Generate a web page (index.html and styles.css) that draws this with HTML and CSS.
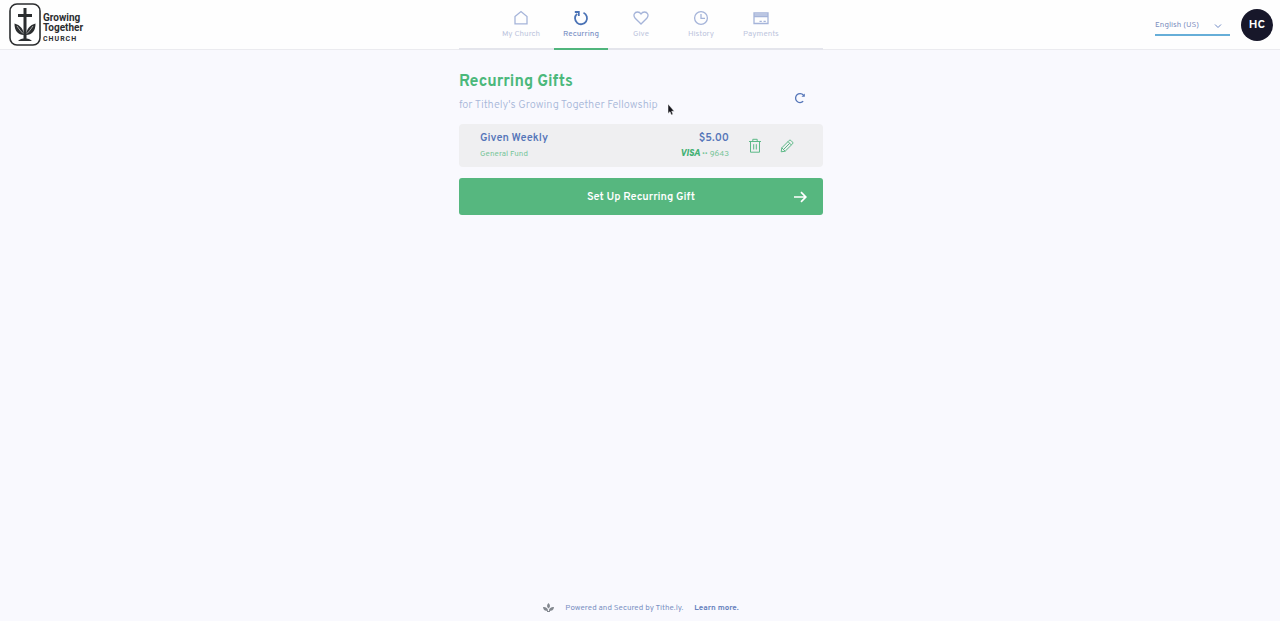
FILE: index.html
```html
<!DOCTYPE html>
<html lang="en">
<head>
    <meta charset="UTF-8">
    <meta name="viewport" content="width=device-width, initial-scale=1.0">
    <title>Recurring Gifts</title>
    <link rel="stylesheet" href="styles.css">
</head>
<body>
    <header class="header">
        <a href="#" class="logo">
            <svg width="32" height="43" viewBox="0 0 32 43">
                <rect x="1" y="1" width="30" height="41" rx="7" fill="#fff" stroke="#2b2d2f" stroke-width="1.6"/>
                <g fill="#2b2d2f">
                    <path d="M14.500 5h3v6h5.500v3h-5.500v21.500c2 .2 4 1 5.500 2.500H9c1.500-1.500 3.500-2.300 5.500-2.500V14H9v-3h5.500z"/>
                    <path d="M15 32c-6 0-9.500-4-9.500-11.500 5.500 1.500 9 5.500 9.500 11.500z"/>
                    <path d="M17 32c6 0 9.500-4 9.500-11.500-5.500 1.500-9 5.500-9.500 11.500z"/>
                </g>
                <path d="M8 23c2 3 4 5.500 6 7.500M24 23c-2 3-4 5.500-6 7.500" fill="none" stroke="#fff" stroke-width=".6"/>
            </svg>
            <span class="logo-text">Growing<br>Together<br><small>CHURCH</small></span>
        </a>

        <nav class="nav">
            <a href="#">
                <svg class="icon" viewBox="0 0 16 16"><path d="M2 6.500 8 1.500l6 5v7.300H2z"/></svg>
                My Church
            </a>
            <a href="#" class="active">
                <svg class="icon" viewBox="0 0 16 16"><path d="M10.500 2.800A6 6 0 1 1 4 3.800M1.800 2h4v4"/></svg>
                Recurring
            </a>
            <a href="#">
                <svg class="icon" viewBox="0 0 16 16"><path d="M8 14 2.200 8.200C-.4 5.200 1.600 2 4.500 2 6.300 2 7.400 3 8 4c.6-1 1.700-2 3.500-2 2.900 0 4.900 3.200 2.300 6.200z"/></svg>
                Give
            </a>
            <a href="#">
                <svg class="icon" viewBox="0 0 16 16"><circle cx="8" cy="8" r="6.400"/><path d="M8 4v4.300h4"/></svg>
                History
            </a>
            <a href="#">
                <svg class="icon" viewBox="0 0 16 16"><path d="M1 3h14v10.500H1zM1 4.800h14M1 6.500h14M6.500 11.300h2.300M10.500 11.300h2.300"/></svg>
                Payments
            </a>
        </nav>

        <div class="account">
            <div class="language">
                <select aria-label="Language">
                    <option>English (US)</option>
                </select>
                <svg class="chevron" width="8" height="6" viewBox="0 0 8 6"><path d="m1 1.500 3 3 3-3"/></svg>
            </div>
            <button type="button" class="avatar">HC</button>
        </div>
    </header>

    <main class="main">
        <div class="title">
            <div class="title-text">
                <h1>Recurring Gifts</h1>
                <p>for Tithely's Growing Together Fellowship</p>
                <svg class="cursor" width="8" height="13" viewBox="0 0 8 13"><path d="M1 1v9.500l2-1.800 1.300 3.200 1.700-.7-1.300-3h2.600z"/></svg>
            </div>
            <button type="button" class="icon-button refresh" aria-label="Refresh">
                <svg width="12" height="12" viewBox="0 0 12 12"><path d="M9.200 9.300A4.500 4.500 0 1 1 9.400 3"/><path d="M10.800 1.500v3.300H7.500z" fill="currentColor" stroke="none"/></svg>
            </button>
        </div>

        <section class="gift">
            <div class="gift-name">
                <h2>Given Weekly</h2>
                <p>General Fund</p>
            </div>
            <div class="gift-amount">
                <strong>$5.00</strong>
                <p><b>VISA</b> <span>••</span> 9643</p>
            </div>
            <button type="button" class="icon-button" aria-label="Delete">
                <svg width="14" height="16" viewBox="0 0 14 16"><path d="M1 3.500h12M2.500 3.500v10.700h9V3.500M4.800 3.500V1.300h4.400v2.200M5.700 6.200v5.300M8.300 6.200v5.300"/></svg>
            </button>
            <button type="button" class="icon-button" aria-label="Edit">
                <svg width="14" height="14" viewBox="0 0 14 14"><path d="m1.200 12.800.6-4L9.200 1.400q.8-.8 1.600 0l1.800 1.800q.8.800 0 1.600L5.200 12.200zM1.800 8.800l3.400 3.400M8 2.600 11.400 6M3.500 10.500l6.200-6.200"/></svg>
            </button>
        </section>

        <button type="button" class="setup">
            <span>Set Up Recurring Gift</span>
            <svg width="14" height="12" viewBox="0 0 14 12"><path d="M1 6h11.500M8 1.200 12.800 6 8 10.800"/></svg>
        </button>
    </main>

    <footer class="footer">
        <svg width="11" height="10" viewBox="0 0 11 10">
            <path d="M5.500 0C7.500 2 7.500 4 5.500 5.500 3.500 4 3.500 2 5.500 0zM0 4c3 0 5 1 5 4C2 8 .3 7 0 4zM11 4c-3 0-5 1-5 4 3 0 4.700-1 5-4zM4 8h3v1H4z"/>
        </svg>
        <span>Powered and Secured by Tithe.ly.</span>
        <a href="#">Learn more.</a>
    </footer>
</body>
</html>
```

FILE: styles.css
```css
* {
    box-sizing: border-box;
}
body {
    margin: 0;
    min-height: 100vh;
    display: flex;
    flex-direction: column;
    background-color: #f9f9fe;
    color: #5873b3;
    font-family: Overpass, Roboto, sans-serif;
}
h1, h2, p {
    margin: 0;
}
a {
    color: inherit;
    text-decoration: none;
}
button {
    border: none;
    padding: 0;
    font-family: inherit;
    cursor: pointer;
}
svg {
    display: block;
    fill: none;
    stroke: currentColor;
}

/* header */
.header {
    display: grid;
    grid-template-columns: 1fr 364px 1fr;
    height: 50px;
    padding: 0 7px 0 9px;
    background-color: #fefefe;
    border-bottom: 1px solid #ebebef;
}
.logo {
    display: flex;
    align-items: center;
    gap: 2px;
    padding-bottom: 2px;
    color: #2b2d2f;
}
.logo svg {
    stroke: none;
}
.logo-text {
    padding-top: 9px;
    font-family: Roboto, sans-serif;
    font-size: 10px;
    font-weight: 700;
    line-height: 10px;
}
.logo-text small {
    font-size: 7px;
    letter-spacing: 1px;
}
.nav {
    display: flex;
    justify-content: center;
    gap: 6px;
    height: 50px;
    border-bottom: 2px solid #e4e5ec;
}
.nav a {
    display: flex;
    flex-direction: column;
    align-items: center;
    gap: 3px;
    width: 54px;
    height: 50px;
    padding-top: 10px;
    border-bottom: 2px solid transparent;
    color: #bdc5dd;
    font-size: 8px;
    line-height: 10px;
    white-space: nowrap;
}
.nav .icon {
    width: 16px;
    height: 16px;
    stroke: #a5b4d9;
    stroke-width: 1.3;
}
.nav .active {
    color: #7f94c6;
    font-weight: 500;
    border-color: #50b57c;
}
.nav .active .icon {
    stroke: #4a72b5;
    stroke-width: 1.8;
}
.account {
    display: flex;
    justify-content: flex-end;
    align-items: center;
    gap: 11px;
}
.language {
    position: relative;
    width: 75px;
    border-bottom: 2px solid #66aed8;
}
.language select {
    display: block;
    width: 100%;
    height: 20px;
    padding: 2px 0 0;
    border: none;
    background: transparent;
    appearance: none;
    color: #7e90bf;
    font-family: inherit;
    font-size: 8px;
}
.chevron {
    position: absolute;
    right: 8px;
    top: 9px;
    color: #6d88c4;
    pointer-events: none;
}
.avatar {
    width: 32px;
    height: 32px;
    border-radius: 50%;
    background-color: #17172a;
    color: #fff;
    font-size: 12px;
    font-weight: 700;
}

/* content */
.main {
    flex: 1;
    width: 366px;
    margin: 0 auto;
    padding: 21px 0 0 2px;
}
.title {
    display: flex;
    justify-content: space-between;
    align-items: center;
    padding-right: 17px;
    margin-bottom: 11px;
}
.title-text {
    position: relative;
}
.title h1 {
    color: #4bb87b;
    font-size: 16px;
    font-weight: 700;
    line-height: 22px;
}
.title p {
    margin-top: 4px;
    color: #a6b6d8;
    font-size: 11px;
    font-weight: 300;
    line-height: 16px;
}
.cursor {
    position: absolute;
    left: 208px;
    top: 32px;
    fill: #17171d;
    stroke: #fff;
    stroke-width: .5;
}
.icon-button {
    background: transparent;
    color: #5cb987;
}
.refresh {
    margin-top: 12px;
    color: #5475b8;
    stroke-width: 1.3;
}
.gift {
    display: flex;
    align-items: center;
    height: 43px;
    padding: 0 29px 0 21px;
    border-radius: 4px;
    background-color: #efeff1;
}
.gift-name {
    flex: 1;
}
.gift h2, .gift strong {
    display: block;
    color: #5676b9;
    font-size: 11px;
    font-weight: 600;
    line-height: 16px;
}
.gift p {
    color: #78c59a;
    font-size: 8px;
    line-height: 16px;
}
.gift h2, .gift strong {
    padding-top: 1px;
}
.gift-amount {
    margin-right: 19px;
    text-align: right;
}
.gift b {
    color: #43b174;
    font-size: 9px;
    font-weight: 900;
    font-style: italic;
}
.gift p span {
    font-size: 7px;
}
.gift .icon-button + .icon-button {
    margin-left: 18px;
}
.setup {
    display: grid;
    grid-template-columns: 1fr auto 1fr;
    align-items: center;
    width: 100%;
    height: 37px;
    margin-top: 11px;
    padding: 0 16px;
    border-radius: 3px;
    background-color: #56b77f;
    color: #fff;
    font-size: 11px;
    font-weight: 600;
}
.setup span {
    grid-column: 2;
}
.setup svg {
    justify-self: end;
    stroke-width: 1.7;
}

/* footer */
.footer {
    display: flex;
    justify-content: center;
    align-items: center;
    gap: 11px;
    padding: 0 0 8px 2px;
    color: #7b91c3;
    font-size: 8px;
    line-height: 10px;
}
.footer svg {
    fill: #83888f;
    stroke: none;
}
.footer a {
    color: #6a84bf;
    font-weight: 700;
}
```
